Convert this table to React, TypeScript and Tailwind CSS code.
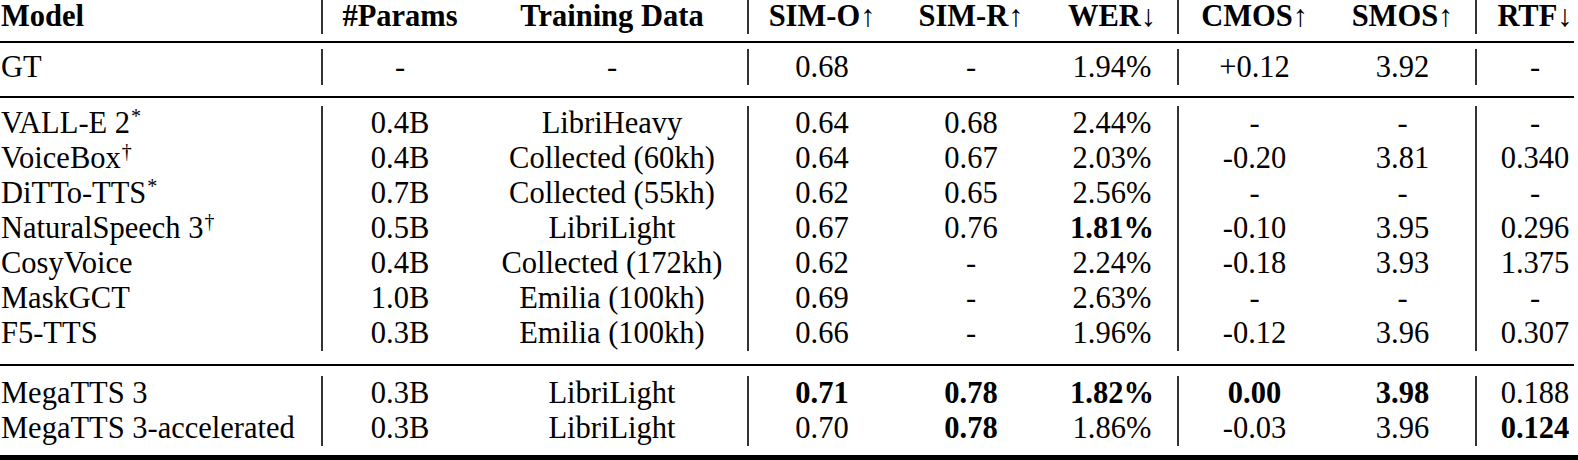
import React from "react";

type Cell = string | { v: string; b?: boolean; sup?: string };

const header = ["#Params", "Training Data", "SIM-O", "SIM-R", "WER", "CMOS", "SMOS", "RTF"];
const arrows = ["", "", "↑", "↑", "↓", "↑", "↑", "↓"];

const gt: Cell[] = ["GT", "-", "-", "0.68", "-", "1.94%", "+0.12", "3.92", "-"];

const baselines: Cell[][] = [
  [{ v: "VALL-E 2", sup: "*" }, "0.4B", "LibriHeavy", "0.64", "0.68", "2.44%", "-", "-", "-"],
  [{ v: "VoiceBox", sup: "†" }, "0.4B", "Collected (60kh)", "0.64", "0.67", "2.03%", "-0.20", "3.81", "0.340"],
  [{ v: "DiTTo-TTS", sup: "*" }, "0.7B", "Collected (55kh)", "0.62", "0.65", "2.56%", "-", "-", "-"],
  [{ v: "NaturalSpeech 3", sup: "†" }, "0.5B", "LibriLight", "0.67", "0.76", { v: "1.81%", b: true }, "-0.10", "3.95", "0.296"],
  ["CosyVoice", "0.4B", "Collected (172kh)", "0.62", "-", "2.24%", "-0.18", "3.93", "1.375"],
  ["MaskGCT", "1.0B", "Emilia (100kh)", "0.69", "-", "2.63%", "-", "-", "-"],
  ["F5-TTS", "0.3B", "Emilia (100kh)", "0.66", "-", "1.96%", "-0.12", "3.96", "0.307"],
];

const ours: Cell[][] = [
  ["MegaTTS 3", "0.3B", "LibriLight", { v: "0.71", b: true }, { v: "0.78", b: true }, { v: "1.82%", b: true }, { v: "0.00", b: true }, { v: "3.98", b: true }, "0.188"],
  ["MegaTTS 3-accelerated", "0.3B", "LibriLight", "0.70", { v: "0.78", b: true }, "1.86%", "-0.03", "3.96", { v: "0.124", b: true }],
];

// column boxes, measured off the reference; bars sit on the left edge of 1, 3, 6, 8
const cols = [
  "w-[321px] justify-start pl-[1px]",
  "w-[156px] justify-center border-l-2 border-[#333]",
  "w-[270px] justify-center",
  "w-[148px] justify-center border-l-2 border-[#333]",
  "w-[152px] justify-center",
  "w-[130px] justify-center",
  "w-[153px] justify-center border-l-2 border-[#333]",
  "w-[145px] justify-center",
  "w-[99px] justify-center border-l-2 border-[#333] pl-[24px] pr-[5px]",
];

function Row({ cells, h = "h-[35px]" }: { cells: Cell[]; h?: string }) {
  return (
    <div className={`flex ${h}`}>
      {cells.map((c, i) => {
        const cell = typeof c === "string" ? { v: c } : c;
        return (
          <div key={i} className={`flex shrink-0 items-center leading-[35px] ${cols[i]}`}>
            <span className={cell.b ? "font-bold" : ""}>
              {cell.v}
              {cell.sup && <sup className="text-[20px] ml-[1px]">{cell.sup}</sup>}
            </span>
          </div>
        );
      })}
    </div>
  );
}

export default function App() {
  return (
    <div className="w-[1578px] h-[460px] bg-white text-black overflow-hidden" style={{ fontFamily: '"Liberation Serif", "Times New Roman", serif' }}>
      <div className="w-[1574px] text-[30.5px]">
        {/* header */}
        <div className="flex h-[41px] items-start">
          <div className={`flex shrink-0 h-[34px] items-start leading-[33px] font-bold ${cols[0]}`}>Model</div>
          {header.map((t, i) => (
            <div key={t} className={`flex shrink-0 h-[34px] items-start leading-[33px] ${cols[i + 1]}`}>
              <span className="font-bold">{t}</span>
              {arrows[i] && <span className="font-normal">{arrows[i]}</span>}
            </div>
          ))}
        </div>
        <div className="h-[2px] bg-black" />

        <div className="pt-[6px] pb-[11px]">
          <Row cells={gt} h="h-[36px]" />
        </div>
        <div className="h-[2px] bg-black" />

        <div className="pt-[8px] pb-[13px]">
          {baselines.map((r, i) => (
            <Row key={i} cells={r} />
          ))}
        </div>
        <div className="h-[2px] bg-black" />

        <div className="pt-[10px] pb-[9px]">
          {ours.map((r, i) => (
            <Row key={i} cells={r} />
          ))}
        </div>
      </div>
      <div className="w-[1578px] h-[5px] bg-black" />
    </div>
  );
}
